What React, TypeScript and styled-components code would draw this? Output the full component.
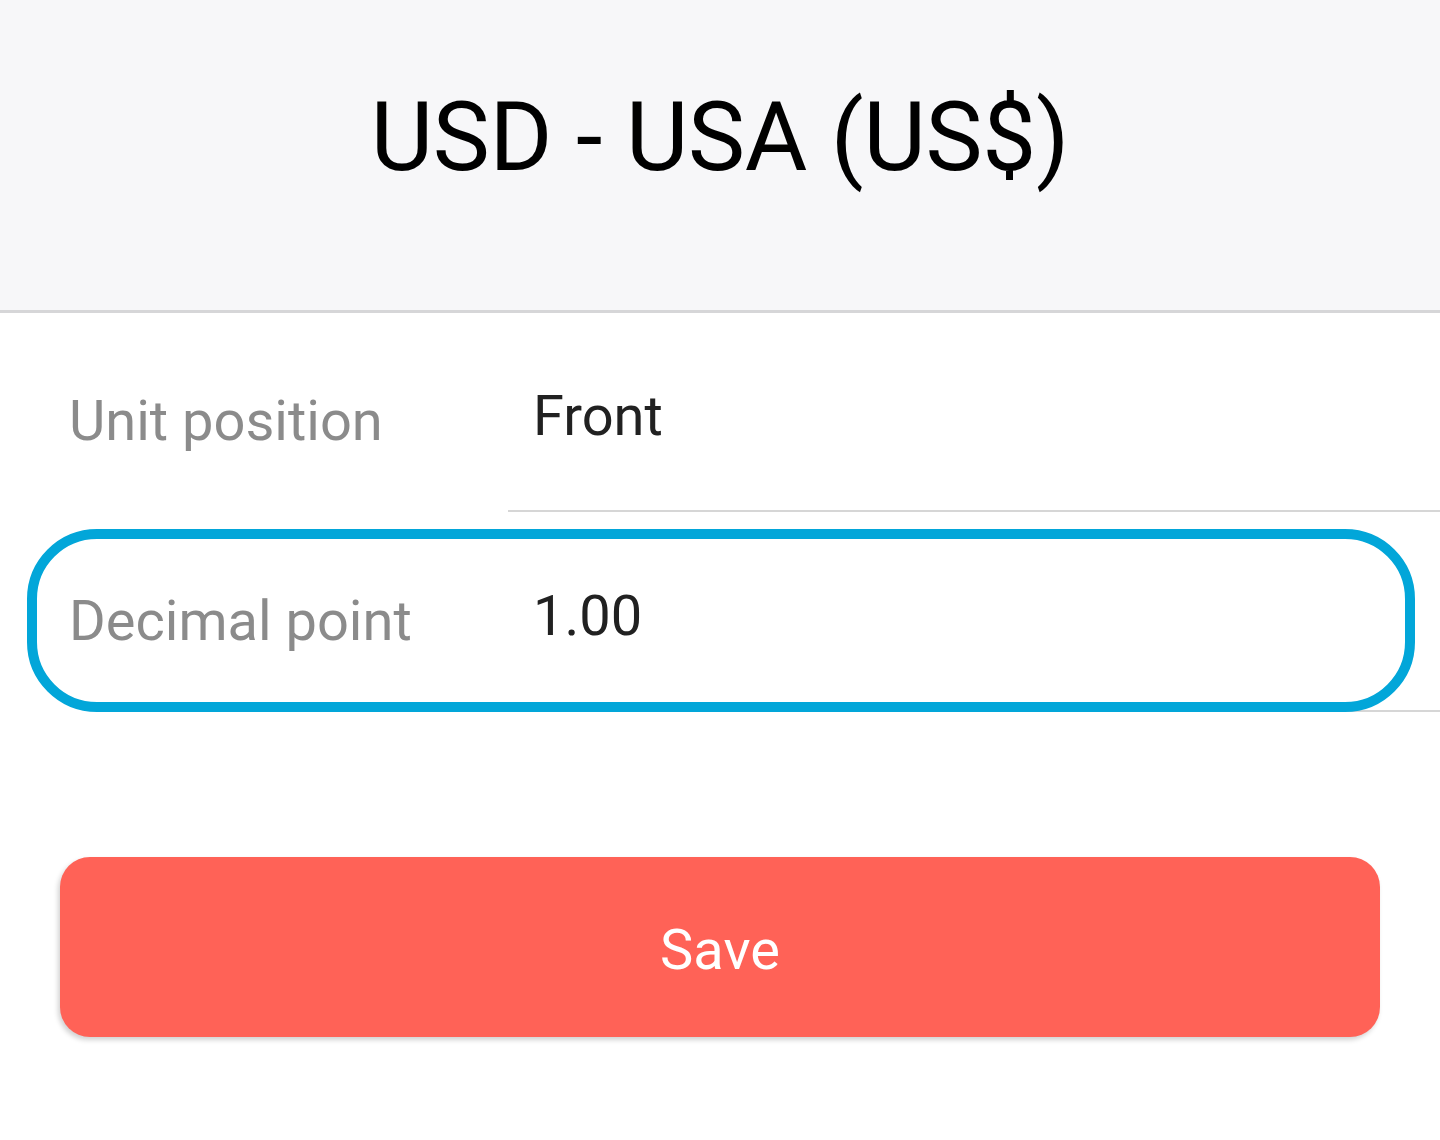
import React from "react";
import styled, { createGlobalStyle } from "styled-components";

const Global = createGlobalStyle`
  html, body { margin: 0; padding: 0; background: #ffffff; }
  body { font-family: Roboto, "Noto Sans", sans-serif; width: 1440px; height: 1140px; overflow: hidden; }
`;

const Page = styled.div`
  width: 1440px;
  min-height: 1140px;
  background: #ffffff;
  display: flex;
  flex-direction: column;
`;

const Header = styled.header`
  height: 310px;
  box-sizing: content-box;
  background: #f7f7f9;
  border-bottom: 3px solid #d6d6d8;
  display: flex;
  justify-content: center;
  align-items: flex-start;
`;

const Title = styled.h1`
  margin: 89px 0 0;
  font-family: Roboto, sans-serif;
  font-weight: 400;
  font-size: 96px;
  line-height: 96px;
  color: #000000;
  letter-spacing: -0.2px;
`;

const Form = styled.section`
  display: flex;
  flex-direction: column;
  margin-top: -1px;
`;

const Row = styled.div`
  position: relative;
  display: grid;
  grid-template-columns: 508px 1fr;
  height: 200px;
`;

const Label = styled.div`
  padding: 81px 0 0 69px;
  font-size: 56px;
  line-height: 56px;
  color: #8b8b8b;
`;

const Value = styled.div`
  padding: 76px 0 0 25px;
  font-size: 56px;
  line-height: 56px;
  color: #212121;
  border-bottom: 2px solid #d6d6d6;
`;

const FocusRing = styled.div`
  position: absolute;
  left: 27px;
  top: 17px;
  width: 1388px;
  height: 183px;
  box-sizing: border-box;
  border: 10px solid #02a6d9;
  border-radius: 70px;
  pointer-events: none;
`;

const SaveButton = styled.button`
  margin: 145px 60px 0;
  height: 180px;
  border: none;
  border-radius: 30px;
  background: #ff6257;
  color: #ffffff;
  font-family: Roboto, sans-serif;
  font-size: 56px;
  font-weight: 400;
  box-shadow: -2px 3px 5px rgba(0, 0, 0, 0.18);
  cursor: pointer;
  padding: 5px 0 0;
`;

type FieldProps = { label: string; value: string; focused?: boolean };

const Field = ({ label, value, focused }: FieldProps) => (
  <Row>
    <Label>{label}</Label>
    <Value>{value}</Value>
    {focused && <FocusRing />}
  </Row>
);

export default function App() {
  return (
    <Page>
      <Global />
      <Header>
        <Title>USD - USA (US$)</Title>
      </Header>
      <Form>
        <Field label="Unit position" value="Front" />
        <Field label="Decimal point" value="1.00" focused />
      </Form>
      <SaveButton>Save</SaveButton>
    </Page>
  );
}
